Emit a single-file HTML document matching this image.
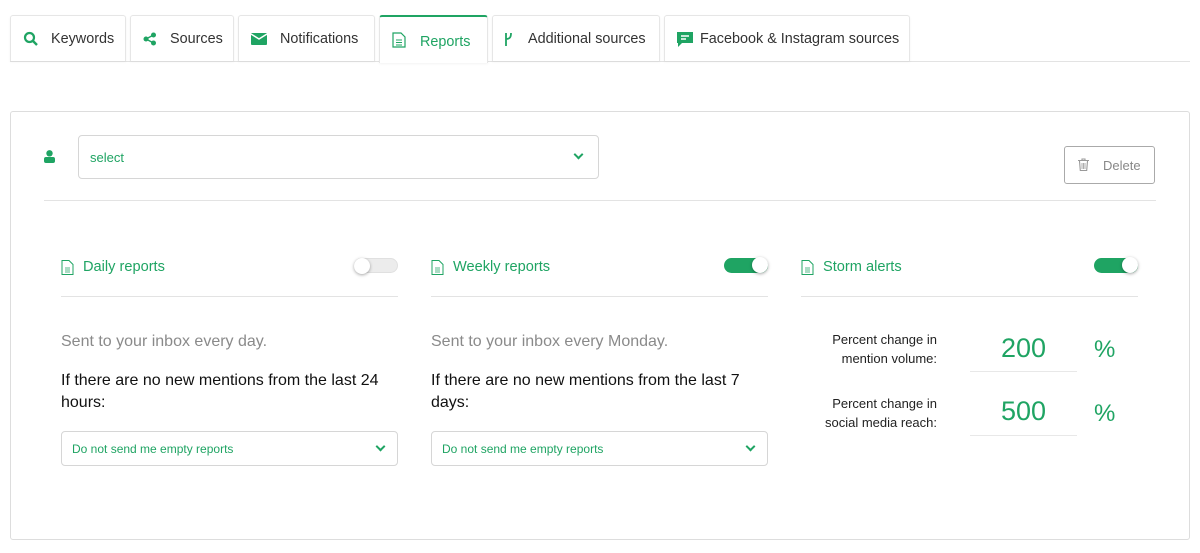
<!DOCTYPE html>
<html><head><meta charset="utf-8"><style>
*{box-sizing:border-box;margin:0;padding:0}
body{width:1200px;height:553px;background:#fff;font-family:"Liberation Sans",Arial,sans-serif;position:relative;overflow:hidden;color:#222}
.a{position:absolute}
.tab{position:absolute;top:15px;height:46px;border:1px solid #e6e6e6;border-bottom:none;border-radius:3px 3px 0 0;font-size:14.4px;color:#333;display:flex;align-items:center;box-shadow:0 1px 2px rgba(0,0,0,.05)}
.tab svg{position:absolute}
.g{color:#1fa463}
.line{position:absolute;height:1px;background:#e3e3e3}
.sel{position:absolute;border:1px solid #d6d6d6;border-radius:4px;font-size:13px;color:#1fa463}
.chev{position:absolute;width:7px;height:7px;border-right:2px solid #1fa463;border-bottom:2px solid #1fa463;transform:rotate(45deg)}
.hd{position:absolute;font-size:14.6px;color:#1fa463}
.tg{position:absolute;width:44px;height:15px;border-radius:8px}
.knob{position:absolute;top:-1px;width:16px;height:16px;border-radius:50%;background:#fff;box-shadow:0 1px 3px rgba(0,0,0,.35)}
.gr{position:absolute;font-size:16px;color:#8a8a8a}
.bk{position:absolute;font-size:16px;color:#111;line-height:22px;width:340px}
.lab{position:absolute;font-size:13px;color:#222;text-align:right;line-height:19px;width:200px}
.num{position:absolute;font-size:27px;color:#1fa463}
.pc{position:absolute;font-size:24px;color:#1fa463;font-weight:300}
</style></head><body>
<div class="line" style="left:10px;top:61px;width:1180px"></div>
<div class="tab" style="left:10px;width:116px"><svg style="left:12px" width="16" height="16" viewBox="0 0 16 16"><circle cx="6.5" cy="6.5" r="4.5" fill="none" stroke="#1fa463" stroke-width="2.2"/><path d="M10 10l4 4" stroke="#1fa463" stroke-width="2.4"/></svg><span style="margin-left:40px">Keywords</span></div>
<div class="tab" style="left:130px;width:104px"><svg style="left:12px" width="14" height="14" viewBox="0 0 14 14"><circle cx="3" cy="7" r="2.5" fill="#1fa463"/><circle cx="10.5" cy="3" r="2.5" fill="#1fa463"/><circle cx="10.5" cy="11" r="2.5" fill="#1fa463"/><path d="M3 7L10.5 3M3 7l7.5 4" stroke="#1fa463" stroke-width="1.5"/></svg><span style="margin-left:39px">Sources</span></div>
<div class="tab" style="left:238px;width:137px"><svg style="left:12px" width="16" height="12" viewBox="0 0 16 12"><rect width="16" height="12" rx="1" fill="#1fa463"/><path d="M0 1l8 5 8-5" fill="none" stroke="#fff" stroke-width="1.5"/></svg><span style="margin-left:41px">Notifications</span></div>
<div class="tab" style="left:379px;width:109px;top:15px;height:48px;border-top:2px solid #1fa463;background:#fff;z-index:2"><svg style="left:12px" width="14" height="16" viewBox="0 0 14 16"><path d="M1 1h8l4 4v10H1z" fill="none" stroke="#1fa463" stroke-width="1.2"/><path d="M4 8h6M4 10.5h6M4 13h6" stroke="#1fa463"/></svg><span class="g" style="margin-left:40px;margin-top:4px">Reports</span></div>
<div class="tab" style="left:492px;width:168px"><svg style="left:10px" width="12" height="16" viewBox="0 0 12 16"><path d="M3 2v13M3 8c4 0 5-2 5-6" fill="none" stroke="#1fa463" stroke-width="1.8"/></svg><span style="margin-left:35px">Additional sources</span></div>
<div class="tab" style="left:664px;width:246px"><svg style="left:12px" width="16" height="16" viewBox="0 0 16 16"><path d="M0 1h16v11H5l-4 4V12H0z" fill="#1fa463"/><path d="M4 5h8M4 8h5" stroke="#fff" stroke-width="1.4"/></svg><span style="margin-left:35px">Facebook &amp; Instagram sources</span></div>

<div class="a" style="left:10px;top:111px;width:1180px;height:429px;border:1px solid #ddd;border-radius:3px"></div>
<svg class="a" style="left:44px;top:150px" width="11" height="13" viewBox="0 0 11 13"><circle cx="5.5" cy="3.3" r="3.2" fill="#1fa463"/><rect x="0" y="7" width="11" height="6" rx="2" fill="#1fa463"/></svg>
<div class="sel" style="left:78px;top:135px;width:521px;height:44px;padding:14px 0 0 11px">select<div class="chev" style="right:16px;top:15px"></div></div>
<div class="a" style="left:1064px;top:146px;width:91px;height:38px;border:1px solid #aaa;border-radius:3px;font-size:13px;color:#888;padding:11px 0 0 38px">Delete<svg class="a" style="left:13px;top:11px" width="11" height="13" viewBox="0 0 11 13"><path d="M0 2.5h11M4 2.5V1h3v1.5M1.5 3l.8 9.5h6.4L9.5 3" fill="none" stroke="#999" stroke-width="1.1"/><path d="M4 5v6M5.5 5v6M7 5v6" stroke="#999" stroke-width=".8"/></svg></div>
<div class="line" style="left:44px;top:200px;width:1112px"></div>

<!-- col1 -->
<svg class="a" style="left:61px;top:260px" width="13" height="15" viewBox="0 0 13 15"><path d="M1 .5h7l4 4v10H1z" fill="none" stroke="#1fa463"/><path d="M4 8h5M4 10h5M4 12h5" stroke="#1fa463" stroke-width=".8"/></svg>
<div class="hd" style="left:83px;top:259px">Daily reports</div>
<div class="tg" style="left:354px;top:258px;background:#ececec;border:1px solid #e0e0e0"><div class="knob" style="left:-1px"></div></div>
<div class="line" style="left:61px;top:296px;width:337px"></div>
<div class="gr" style="left:61px;top:333px">Sent to your inbox every day.</div>
<div class="bk" style="left:61px;top:370px">If there are no new mentions from the last 24 hours:</div>
<div class="sel" style="left:61px;top:431px;width:337px;height:35px;padding:10px 0 0 10px;font-size:12px">Do not send me empty reports<div class="chev" style="right:13px;top:11px"></div></div>

<!-- col2 -->
<svg class="a" style="left:431px;top:260px" width="13" height="15" viewBox="0 0 13 15"><path d="M1 .5h7l4 4v10H1z" fill="none" stroke="#1fa463"/><path d="M4 8h5M4 10h5M4 12h5" stroke="#1fa463" stroke-width=".8"/></svg>
<div class="hd" style="left:453px;top:259px">Weekly reports</div>
<div class="tg" style="left:724px;top:258px;background:#1fa463"><div class="knob" style="right:0"></div></div>
<div class="line" style="left:431px;top:296px;width:337px"></div>
<div class="gr" style="left:431px;top:333px">Sent to your inbox every Monday.</div>
<div class="bk" style="left:431px;top:370px">If there are no new mentions from the last 7 days:</div>
<div class="sel" style="left:431px;top:431px;width:337px;height:35px;padding:10px 0 0 10px;font-size:12px">Do not send me empty reports<div class="chev" style="right:13px;top:11px"></div></div>

<!-- col3 -->
<svg class="a" style="left:801px;top:260px" width="13" height="15" viewBox="0 0 13 15"><path d="M1 .5h7l4 4v10H1z" fill="none" stroke="#1fa463"/><path d="M4 8h5M4 10h5M4 12h5" stroke="#1fa463" stroke-width=".8"/></svg>
<div class="hd" style="left:823px;top:259px">Storm alerts</div>
<div class="tg" style="left:1094px;top:258px;background:#1fa463"><div class="knob" style="right:0"></div></div>
<div class="line" style="left:801px;top:296px;width:337px"></div>
<div class="lab" style="left:737px;top:330px">Percent change in<br>mention volume:</div>
<div class="num" style="left:1001px;top:333px">200</div>
<div class="line" style="left:970px;top:371px;width:107px;background:#e8e8e8"></div>
<div class="pc" style="left:1094px;top:336px">%</div>
<div class="lab" style="left:737px;top:394px">Percent change in<br>social media reach:</div>
<div class="num" style="left:1001px;top:396px">500</div>
<div class="line" style="left:970px;top:435px;width:107px;background:#e8e8e8"></div>
<div class="pc" style="left:1094px;top:400px">%</div>
</body></html>
